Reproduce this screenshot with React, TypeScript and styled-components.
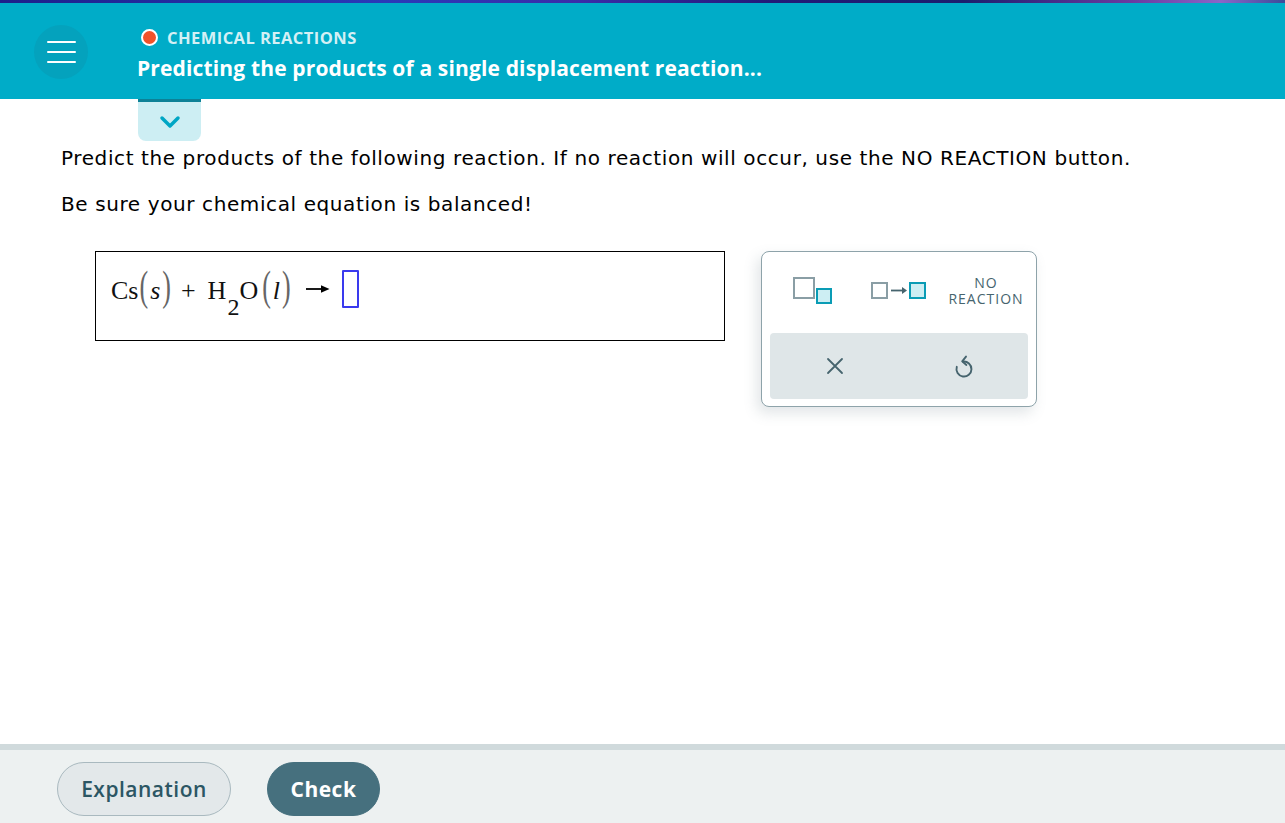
import React from "react";
import styled, { createGlobalStyle } from "styled-components";

const Global = createGlobalStyle`
  html, body { margin: 0; padding: 0; background: #ffffff; }
  * { box-sizing: border-box; }
`;

const Page = styled.div`
  display: flex;
  flex-direction: column;
  height: 823px;
  width: 1285px;
  overflow: hidden;
  background: #ffffff;
`;

const TopStrip = styled.div`
  height: 3px;
  background: linear-gradient(90deg, #1d1f8a 0%, #2a39b8 30%, #3a2ca8 45%, #221a78 60%, #1b1e6e 75%, #6a3aa0 88%, #8a66c8 95%, #3b4b9a 100%);
`;

const Header = styled.header`
  height: 96px;
  background: #00acc8;
  display: flex;
  align-items: center;
  padding-left: 34px;
`;

const MenuButton = styled.div`
  width: 54px;
  height: 54px;
  border-radius: 50%;
  background: #04a2bd;
  display: flex;
  flex-direction: column;
  align-items: center;
  justify-content: center;
  gap: 7.5px;
  margin-top: 2px;
`;

const MenuLine = styled.span`
  display: block;
  width: 29px;
  height: 2.5px;
  border-radius: 2px;
  background: #ffffff;
`;

const TitleBlock = styled.div`
  margin-left: 49px;
  display: flex;
  flex-direction: column;
  gap: 5px;
  margin-top: 6px;
`;

const Topic = styled.div`
  display: flex;
  align-items: center;
  gap: 9px;
  margin-left: 4px;
  font-family: "Open Sans", sans-serif;
  font-weight: 700;
  font-size: 16.5px;
  letter-spacing: 0.45px;
  color: #d4f0f5;
  line-height: 22px;
`;

const Dot = styled.span`
  width: 17px;
  height: 17px;
  border-radius: 50%;
  background: #f0522a;
  border: 2px solid #ffffff;
`;

const Title = styled.div`
  font-family: "Open Sans", sans-serif;
  font-weight: 700;
  font-size: 21px;
  letter-spacing: 0.15px;
  color: #ffffff;
  line-height: 28px;
`;

const Tab = styled.div`
  margin-left: 138px;
  width: 63px;
  height: 42px;
  background: #cdeef3;
  border-top: 3px solid #0d8196;
  border-radius: 0 0 8px 8px;
  display: flex;
  align-items: center;
  justify-content: center;
`;

const Main = styled.main`
  flex: 1;
  padding-left: 61px;
  display: flex;
  flex-direction: column;
`;

const Instructions = styled.div`
  margin-top: -6px;
`;

const Instruction = styled.p`
  margin: 0;
  font-family: "DejaVu Sans", Verdana, sans-serif;
  font-size: 20px;
  line-height: 46px;
  color: #000000;
  letter-spacing: 0.6px;
`;

const Workspace = styled.div`
  display: flex;
  align-items: flex-start;
  gap: 36px;
  margin-left: 34px;
  margin-top: 24px;
`;

const EquationBox = styled.div`
  width: 630px;
  height: 90px;
  border: 1px solid #000000;
  padding: 18px 0 0 15px;
  font-family: "Liberation Serif", "Times New Roman", serif;
  font-size: 26px;
  line-height: 40px;
  color: #111111;
  white-space: nowrap;
`;

const Paren = styled.span<{ $ml?: number }>`
  display: inline-block;
  color: #666666;
  transform: translateY(-4px) scaleY(1.6);
  margin-left: ${(p) => p.$ml ?? 0}px;
`;

const Ital = styled.span<{ $pad?: number }>`
  font-style: italic;
  padding: 0 ${(p) => p.$pad ?? 0}px;
`;

const Plus = styled.span`
  display: inline-block;
  margin: 0 12px 0 10px;
`;

const Sub = styled.span`
  font-size: 24px;
  vertical-align: -16px;
  margin: 0 0 0 1px;
  line-height: 0;
`;

const Arrow = styled.span`
  display: inline-block;
  margin: 0 12px 0 15px;
  vertical-align: 5px;
  line-height: 0;
`;

const Slot = styled.span`
  display: inline-block;
  width: 17px;
  height: 38px;
  border: 2px solid #3a3aee;
  border-radius: 1px;
  vertical-align: -9px;
`;

const Palette = styled.div`
  width: 276px;
  height: 156px;
  border: 1px solid #8ea3aa;
  border-radius: 8px;
  background: #ffffff;
  box-shadow: -4px 6px 14px rgba(90, 110, 120, 0.18);
  padding: 0 8px 7px 8px;
  display: flex;
  flex-direction: column;
`;

const PaletteRow = styled.div`
  height: 81px;
  display: grid;
  grid-template-columns: 1fr 1fr 1fr;
  align-items: center;
  justify-items: center;
  padding-bottom: 3px;
`;

const NoReaction = styled.div`
  font-family: "Open Sans", sans-serif;
  font-size: 14px;
  line-height: 16px;
  letter-spacing: 1px;
  color: #46646e;
  text-align: center;
  margin-left: 2px;
  display: flex;
  flex-direction: column;
  align-items: center;
`;

const ActionBar = styled.div`
  flex: 1;
  background: #dfe6e8;
  border-radius: 4px;
  display: grid;
  grid-template-columns: 1fr 1fr;
  align-items: center;
  justify-items: center;
`;

const Footer = styled.footer`
  height: 79px;
  border-top: 6px solid #d0dadc;
  background: #edf1f1;
  display: flex;
  align-items: flex-start;
  padding: 12px 0 0 57px;
  gap: 36px;
`;

const PillButton = styled.button<{ $primary?: boolean }>`
  height: 54px;
  border-radius: 27px;
  font-family: "Open Sans", sans-serif;
  font-size: 21px;
  font-weight: ${(p) => (p.$primary ? 700 : 600)};
  letter-spacing: 0.5px;
  padding: 0;
  border: 1px solid ${(p) => (p.$primary ? "#46707e" : "#a9b9bf")};
  background: ${(p) => (p.$primary ? "#46707e" : "#e3e8ea")};
  color: ${(p) => (p.$primary ? "#ffffff" : "#2c5664")};
  width: ${(p) => (p.$primary ? "113px" : "174px")};
`;

const Chevron = () => (
  <svg width="22" height="14" viewBox="0 0 22 14">
    <path d="M3 3 L11 11 L19 3" fill="none" stroke="#00a6c4" strokeWidth="3.5" strokeLinecap="round" strokeLinejoin="round" />
  </svg>
);

const SubscriptIcon = () => (
  <svg width="40" height="28" viewBox="0 0 40 28">
    <rect x="1" y="1" width="20" height="20" fill="none" stroke="#8a9ea5" strokeWidth="2" />
    <rect x="24" y="12" width="14" height="14" fill="#cdeef3" stroke="#0a9cb5" strokeWidth="2" />
  </svg>
);

const ArrowIcon = () => (
  <svg width="56" height="18" viewBox="0 0 56 18">
    <rect x="1" y="1" width="15" height="15" fill="none" stroke="#8a9ea5" strokeWidth="2" />
    <line x1="20" y1="8.5" x2="33" y2="8.5" stroke="#46646e" strokeWidth="1.8" />
    <path d="M31 5 L36 8.5 L31 12 Z" fill="#46646e" />
    <rect x="39" y="1" width="15" height="15" fill="#cdeef3" stroke="#0a9cb5" strokeWidth="2" />
  </svg>
);

const CloseIcon = () => (
  <svg width="18" height="18" viewBox="0 0 18 18">
    <path d="M2 2 L16 16 M16 2 L2 16" stroke="#46646e" strokeWidth="1.8" strokeLinecap="round" />
  </svg>
);

const UndoIcon = () => (
  <svg width="22" height="26" viewBox="0 0 22 26">
    <path d="M10 8.6 A7.5 7.5 0 1 1 3.8 13.8" fill="none" stroke="#46646e" strokeWidth="1.9" strokeLinecap="round" />
    <path d="M13 3.6 L9.2 8.4 L13.4 12" fill="none" stroke="#46646e" strokeWidth="1.9" strokeLinecap="round" strokeLinejoin="round" />
  </svg>
);

const EqArrow = () => (
  <svg width="24" height="10" viewBox="0 0 24 10">
    <line x1="0" y1="5" x2="17" y2="5" stroke="#000" strokeWidth="1.8" />
    <path d="M15 1.3 L23.5 5 L15 8.7 Z" fill="#000" />
  </svg>
);

export default function App() {
  return (
    <>
      <Global />
      <Page>
        <TopStrip />
        <Header>
          <MenuButton>
            <MenuLine />
            <MenuLine />
            <MenuLine />
          </MenuButton>
          <TitleBlock>
            <Topic>
              <Dot />
              CHEMICAL REACTIONS
            </Topic>
            <Title>Predicting the products of a single displacement reaction...</Title>
          </TitleBlock>
        </Header>
        <Tab>
          <Chevron />
        </Tab>
        <Main>
          <Instructions>
            <Instruction>
              Predict the products of the following reaction. If no reaction will occur, use the NO REACTION button.
            </Instruction>
            <Instruction>Be sure your chemical equation is balanced!</Instruction>
          </Instructions>
          <Workspace>
            <EquationBox>
              Cs
              <Paren $ml={1}>(</Paren>
              <Ital $pad={2}>s</Ital>
              <Paren>)</Paren>
              <Plus>+</Plus>H<Sub>2</Sub>O
              <Paren $ml={4}>(</Paren>
              <Ital $pad={2}>l</Ital>
              <Paren>)</Paren>
              <Arrow>
                <EqArrow />
              </Arrow>
              <Slot />
            </EquationBox>
            <Palette>
              <PaletteRow>
                <SubscriptIcon />
                <ArrowIcon />
                <NoReaction>
                  <span>NO</span>
                  <span>REACTION</span>
                </NoReaction>
              </PaletteRow>
              <ActionBar>
                <CloseIcon />
                <UndoIcon />
              </ActionBar>
            </Palette>
          </Workspace>
        </Main>
        <Footer>
          <PillButton>Explanation</PillButton>
          <PillButton $primary>Check</PillButton>
        </Footer>
      </Page>
    </>
  );
}
